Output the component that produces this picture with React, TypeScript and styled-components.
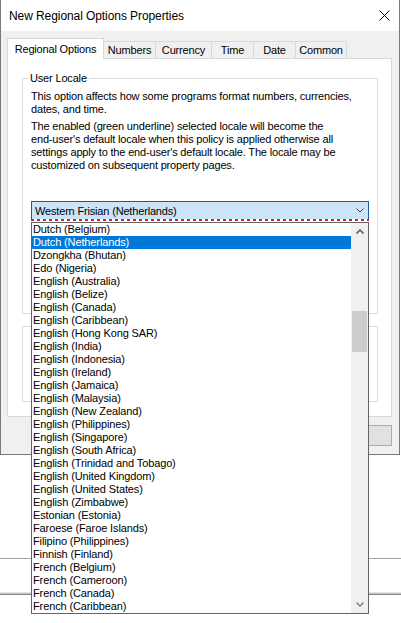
import styled, { createGlobalStyle } from 'styled-components';

const GlobalStyle = createGlobalStyle`
  html, body {
    margin: 0;
    padding: 0;
    background: #ffffff;
  }
  body {
    font-family: 'Liberation Sans', Arial, sans-serif;
  }
  * {
    box-sizing: border-box;
  }
`;

const TABS = [
  { label: 'Regional Options', width: 97 },
  { label: 'Numbers', width: 53 },
  { label: 'Currency', width: 57 },
  { label: 'Time', width: 43 },
  { label: 'Date', width: 43 },
  { label: 'Common', width: 52 },
];

const LOCALES = [
  'Dutch (Belgium)',
  'Dutch (Netherlands)',
  'Dzongkha (Bhutan)',
  'Edo (Nigeria)',
  'English (Australia)',
  'English (Belize)',
  'English (Canada)',
  'English (Caribbean)',
  'English (Hong Kong SAR)',
  'English (India)',
  'English (Indonesia)',
  'English (Ireland)',
  'English (Jamaica)',
  'English (Malaysia)',
  'English (New Zealand)',
  'English (Philippines)',
  'English (Singapore)',
  'English (South Africa)',
  'English (Trinidad and Tobago)',
  'English (United Kingdom)',
  'English (United States)',
  'English (Zimbabwe)',
  'Estonian (Estonia)',
  'Faroese (Faroe Islands)',
  'Filipino (Philippines)',
  'Finnish (Finland)',
  'French (Belgium)',
  'French (Cameroon)',
  'French (Canada)',
  'French (Caribbean)',
];

const Screen = styled.div`
  position: relative;
  width: 401px;
  height: 623px;
  overflow: hidden;
  background: #ffffff;
  color: #000000;
  font-family: 'Liberation Sans', Arial, sans-serif;
  font-size: 11px;
  letter-spacing: -0.17px;
`;

const Dialog = styled.div`
  width: 400px;
  height: 455px;
  display: flex;
  flex-direction: column;
  border: 1px solid #7a7a7a;
  border-top: none;
  background: #f0f0f0;
`;

const TitleBar = styled.div`
  height: 31px;
  flex-shrink: 0;
  display: flex;
  align-items: center;
  justify-content: space-between;
  padding: 0 9px 0 8px;
  background: #ffffff;
  font-size: 12px;
  letter-spacing: -0.08px;
`;

const Body = styled.div`
  flex: 1;
  display: flex;
  flex-direction: column;
  padding: 7px 7px 0 6px;
`;

const TabStrip = styled.div`
  position: relative;
  z-index: 1;
  display: flex;
  align-items: flex-end;
  height: 21px;
  margin-bottom: -1px;
`;

const Tab = styled.div<{ $active?: boolean; $width: number }>`
  position: relative;
  z-index: ${(p) => (p.$active ? 2 : 1)};
  width: ${(p) => p.$width}px;
  height: ${(p) => (p.$active ? 21 : 17)}px;
  margin-bottom: ${(p) => (p.$active ? 0 : 1)}px;
  margin-left: -1px;
  display: flex;
  align-items: center;
  justify-content: center;
  border: 1px solid #d9d9d9;
  border-bottom: none;
  background: ${(p) => (p.$active ? '#ffffff' : '#f0f0f0')};
  white-space: nowrap;
  &:first-child {
    margin-left: 0;
  }
`;

const TabPage = styled.div`
  height: 359px;
  display: flex;
  flex-direction: column;
  gap: 12px;
  padding: 13px 13px 0 14px;
  border: 1px solid #d9d9d9;
  background: #ffffff;
`;

const GroupBox = styled.fieldset<{ $height: number }>`
  height: ${(p) => p.$height}px;
  min-width: 0;
  margin: 0;
  padding: 5px 8px 0;
  border: 1px solid #dcdcdc;
`;

const GroupLabel = styled.legend`
  margin-left: -3px;
  padding: 0 2px;
  line-height: 13px;
`;

const Paragraph = styled.p<{ $gap?: number }>`
  margin: ${(p) => p.$gap ?? 0}px 0 0;
  line-height: 13px;
  white-space: nowrap;
`;

const Line = styled.span`
  display: block;
`;

const Combo = styled.div`
  margin-top: 29px;
  height: 20px;
  display: flex;
  flex-direction: column;
  border: 1px solid #1a5b9e;
  border-bottom: none;
  background: #cce4f7;
`;

const ComboField = styled.div`
  flex: 1;
  display: flex;
  align-items: center;
  justify-content: space-between;
  padding: 0 4px 0 3px;
`;

const PolicyUnderline = styled.div`
  height: 2px;
  margin: 0 -1px;
  background: repeating-linear-gradient(90deg, #d21f1f 0 3px, #ffffff 3px 6px);
`;

const ButtonRow = styled.div`
  display: flex;
  justify-content: flex-end;
  gap: 6px;
  margin-top: 8px;
`;

const DialogButton = styled.button`
  width: 75px;
  height: 21px;
  padding: 0;
  border: 1px solid #adadad;
  background: #e1e1e1;
  font: inherit;
  color: #000000;
`;

const Backdrop = styled.div`
  display: flex;
  flex-direction: column;
  padding-top: 103px;
`;

const BackdropRule = styled.div<{ $color: string; $gap?: number }>`
  height: 1px;
  margin-top: ${(p) => p.$gap ?? 0}px;
  background: ${(p) => p.$color};
`;

const DropList = styled.div`
  position: absolute;
  z-index: 10;
  top: 222px;
  left: 31px;
  width: 338px;
  height: 392px;
  display: flex;
  border: 1px solid #646464;
  background: #ffffff;
`;

const Options = styled.div`
  width: 319px;
  display: flex;
  flex-direction: column;
  letter-spacing: -0.12px;
`;

const Option = styled.div<{ $selected?: boolean }>`
  height: 13px;
  line-height: 13px;
  padding-left: 1px;
  white-space: nowrap;
  background: ${(p) => (p.$selected ? '#0078d7' : 'transparent')};
  color: ${(p) => (p.$selected ? '#ffffff' : '#000000')};
`;

const ScrollBar = styled.div`
  width: 17px;
  display: flex;
  flex-direction: column;
  background: #f0f0f0;
`;

const ScrollArrow = styled.div`
  height: 17px;
  flex-shrink: 0;
  display: flex;
  align-items: center;
  justify-content: center;
`;

const ScrollTrack = styled.div`
  flex: 1;
  display: flex;
  flex-direction: column;
`;

const Thumb = styled.div<{ $offset: number; $size: number }>`
  height: ${(p) => p.$size}px;
  margin: ${(p) => p.$offset}px 1px 0;
  background: #cdcdcd;
`;

function CloseIcon() {
  return (
    <svg width="11" height="11" viewBox="0 0 11 11">
      <path d="M0.5 0.5 L10.5 10.5 M10.5 0.5 L0.5 10.5" stroke="#000" strokeWidth="1" fill="none" />
    </svg>
  );
}

function Chevron({ up, color, weight }: { up?: boolean; color: string; weight: number }) {
  return (
    <svg width="8" height="5" viewBox="0 0 8 5">
      <path
        d={up ? 'M0.5 4.5 L4 1 L7.5 4.5' : 'M0.5 0.5 L4 4 L7.5 0.5'}
        stroke={color}
        strokeWidth={weight}
        fill="none"
      />
    </svg>
  );
}

export default function App() {
  return (
    <Screen>
      <GlobalStyle />
      <Dialog>
        <TitleBar>
          <span>New Regional Options Properties</span>
          <CloseIcon />
        </TitleBar>
        <Body>
          <TabStrip>
            {TABS.map((tab, i) => (
              <Tab key={tab.label} $active={i === 0} $width={tab.width}>
                {tab.label}
              </Tab>
            ))}
          </TabStrip>
          <TabPage>
            <GroupBox $height={242}>
              <GroupLabel>User Locale</GroupLabel>
              <Paragraph>
                <Line>This option affects how some programs format numbers, currencies,</Line>
                <Line>dates, and time.</Line>
              </Paragraph>
              <Paragraph $gap={4}>
                <Line>The enabled (green underline) selected locale will become the</Line>
                <Line>end-user's default locale when this policy is applied otherwise all</Line>
                <Line>settings apply to the end-user's default locale. The locale may be</Line>
                <Line>customized on subsequent property pages.</Line>
              </Paragraph>
              <Combo>
                <ComboField>
                  <span>Western Frisian (Netherlands)</span>
                  <Chevron color="#404040" weight={1} />
                </ComboField>
                <PolicyUnderline />
              </Combo>
            </GroupBox>
            <GroupBox $height={76} />
          </TabPage>
          <ButtonRow>
            <DialogButton>OK</DialogButton>
            <DialogButton>Cancel</DialogButton>
            <DialogButton>Apply</DialogButton>
          </ButtonRow>
        </Body>
      </Dialog>
      <Backdrop>
        <BackdropRule $color="#a0a0a0" />
        <BackdropRule $color="#e0e0e0" $gap={33} />
        <BackdropRule $color="#c8c8c8" />
        <BackdropRule $color="#858585" />
      </Backdrop>
      <DropList>
        <Options>
          {LOCALES.map((name) => (
            <Option key={name} $selected={name === 'Dutch (Netherlands)'}>
              {name}
            </Option>
          ))}
        </Options>
        <ScrollBar>
          <ScrollArrow>
            <Chevron up color="#606060" weight={1.6} />
          </ScrollArrow>
          <ScrollTrack>
            <Thumb $offset={71} $size={41} />
          </ScrollTrack>
          <ScrollArrow>
            <Chevron color="#7a7a7a" weight={1.4} />
          </ScrollArrow>
        </ScrollBar>
      </DropList>
    </Screen>
  );
}
